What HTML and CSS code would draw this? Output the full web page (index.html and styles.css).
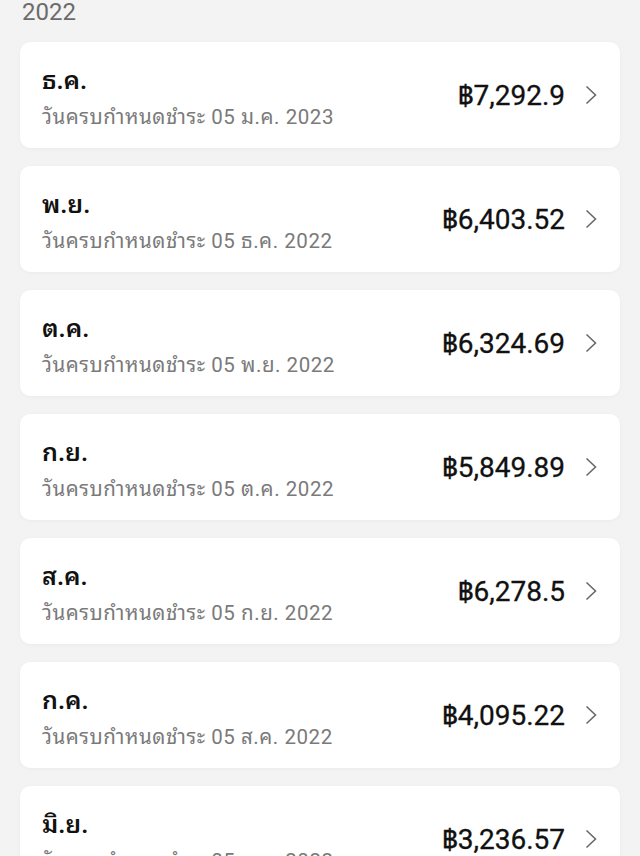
FILE: index.html
```html
<!DOCTYPE html>
<html lang="th">
<head>
<meta charset="utf-8">
<link rel="stylesheet" href="styles.css">
</head>
<body>
<div class="page">
  <div class="year">2022</div>
  <div class="list">
    <div class="card">
      <div class="info"><div class="month">ธ.ค.</div><div class="due">วันครบกำหนดชำระ 05 ม.ค. 2023</div></div>
      <div class="amount">฿7,292.9</div>
      <svg class="chev" viewBox="0 0 12 20"><path d="M1.5 1.5 L10.5 10 L1.5 18.5"/></svg>
    </div>
    <div class="card">
      <div class="info"><div class="month">พ.ย.</div><div class="due">วันครบกำหนดชำระ 05 ธ.ค. 2022</div></div>
      <div class="amount">฿6,403.52</div>
      <svg class="chev" viewBox="0 0 12 20"><path d="M1.5 1.5 L10.5 10 L1.5 18.5"/></svg>
    </div>
    <div class="card">
      <div class="info"><div class="month">ต.ค.</div><div class="due">วันครบกำหนดชำระ 05 พ.ย. 2022</div></div>
      <div class="amount">฿6,324.69</div>
      <svg class="chev" viewBox="0 0 12 20"><path d="M1.5 1.5 L10.5 10 L1.5 18.5"/></svg>
    </div>
    <div class="card">
      <div class="info"><div class="month">ก.ย.</div><div class="due">วันครบกำหนดชำระ 05 ต.ค. 2022</div></div>
      <div class="amount">฿5,849.89</div>
      <svg class="chev" viewBox="0 0 12 20"><path d="M1.5 1.5 L10.5 10 L1.5 18.5"/></svg>
    </div>
    <div class="card">
      <div class="info"><div class="month">ส.ค.</div><div class="due">วันครบกำหนดชำระ 05 ก.ย. 2022</div></div>
      <div class="amount">฿6,278.5</div>
      <svg class="chev" viewBox="0 0 12 20"><path d="M1.5 1.5 L10.5 10 L1.5 18.5"/></svg>
    </div>
    <div class="card">
      <div class="info"><div class="month">ก.ค.</div><div class="due">วันครบกำหนดชำระ 05 ส.ค. 2022</div></div>
      <div class="amount">฿4,095.22</div>
      <svg class="chev" viewBox="0 0 12 20"><path d="M1.5 1.5 L10.5 10 L1.5 18.5"/></svg>
    </div>
    <div class="card">
      <div class="info"><div class="month">มิ.ย.</div><div class="due">วันครบกำหนดชำระ 05 ก.ค. 2022</div></div>
      <div class="amount">฿3,236.57</div>
      <svg class="chev" viewBox="0 0 12 20"><path d="M1.5 1.5 L10.5 10 L1.5 18.5"/></svg>
    </div>
  </div>
</div>
</body>
</html>
```
FILE: styles.css
```css
html, body {
  margin: 0;
  padding: 0;
  background: #f3f3f3;
  height: 856px;
  overflow: hidden;
}
.page {
  font-family: Roboto, "Noto Sans Thai Looped", "Noto Sans Thai", sans-serif;
  padding: 0 20px;
}
.year {
  font-size: 24px;
  color: #6b6b6b;
  line-height: 28px;
  padding-left: 2px;
  margin-top: -2px;
  height: 44px;
}
.list {
  display: flex;
  flex-direction: column;
  gap: 18px;
}
.card {
  background: #fff;
  border-radius: 10px;
  height: 106px;
  box-sizing: border-box;
  padding: 0 23px 0 22px;
  display: flex;
  align-items: center;
  box-shadow: 0 1px 4px rgba(0,0,0,0.04);
}
.info {
  flex: 1;
  display: flex;
  flex-direction: column;
  gap: 6px;
  padding-top: 5px;
}
.month {
  font-size: 25px;
  font-weight: 600;
  color: #111;
  line-height: 32px;
}
.due {
  font-size: 20.5px;
  letter-spacing: 0.55px;
  color: #7a7a7a;
  line-height: 28px;
}
.amount {
  font-size: 28px;
  font-weight: 400;
  color: #111;
  margin-right: 20px;
  margin-bottom: 5px;
  -webkit-text-stroke: 0.3px #111;
}
.chev {
  width: 12px;
  height: 20px;
  fill: none;
  stroke: #6a6a6a;
  stroke-width: 1.6;
}
```
